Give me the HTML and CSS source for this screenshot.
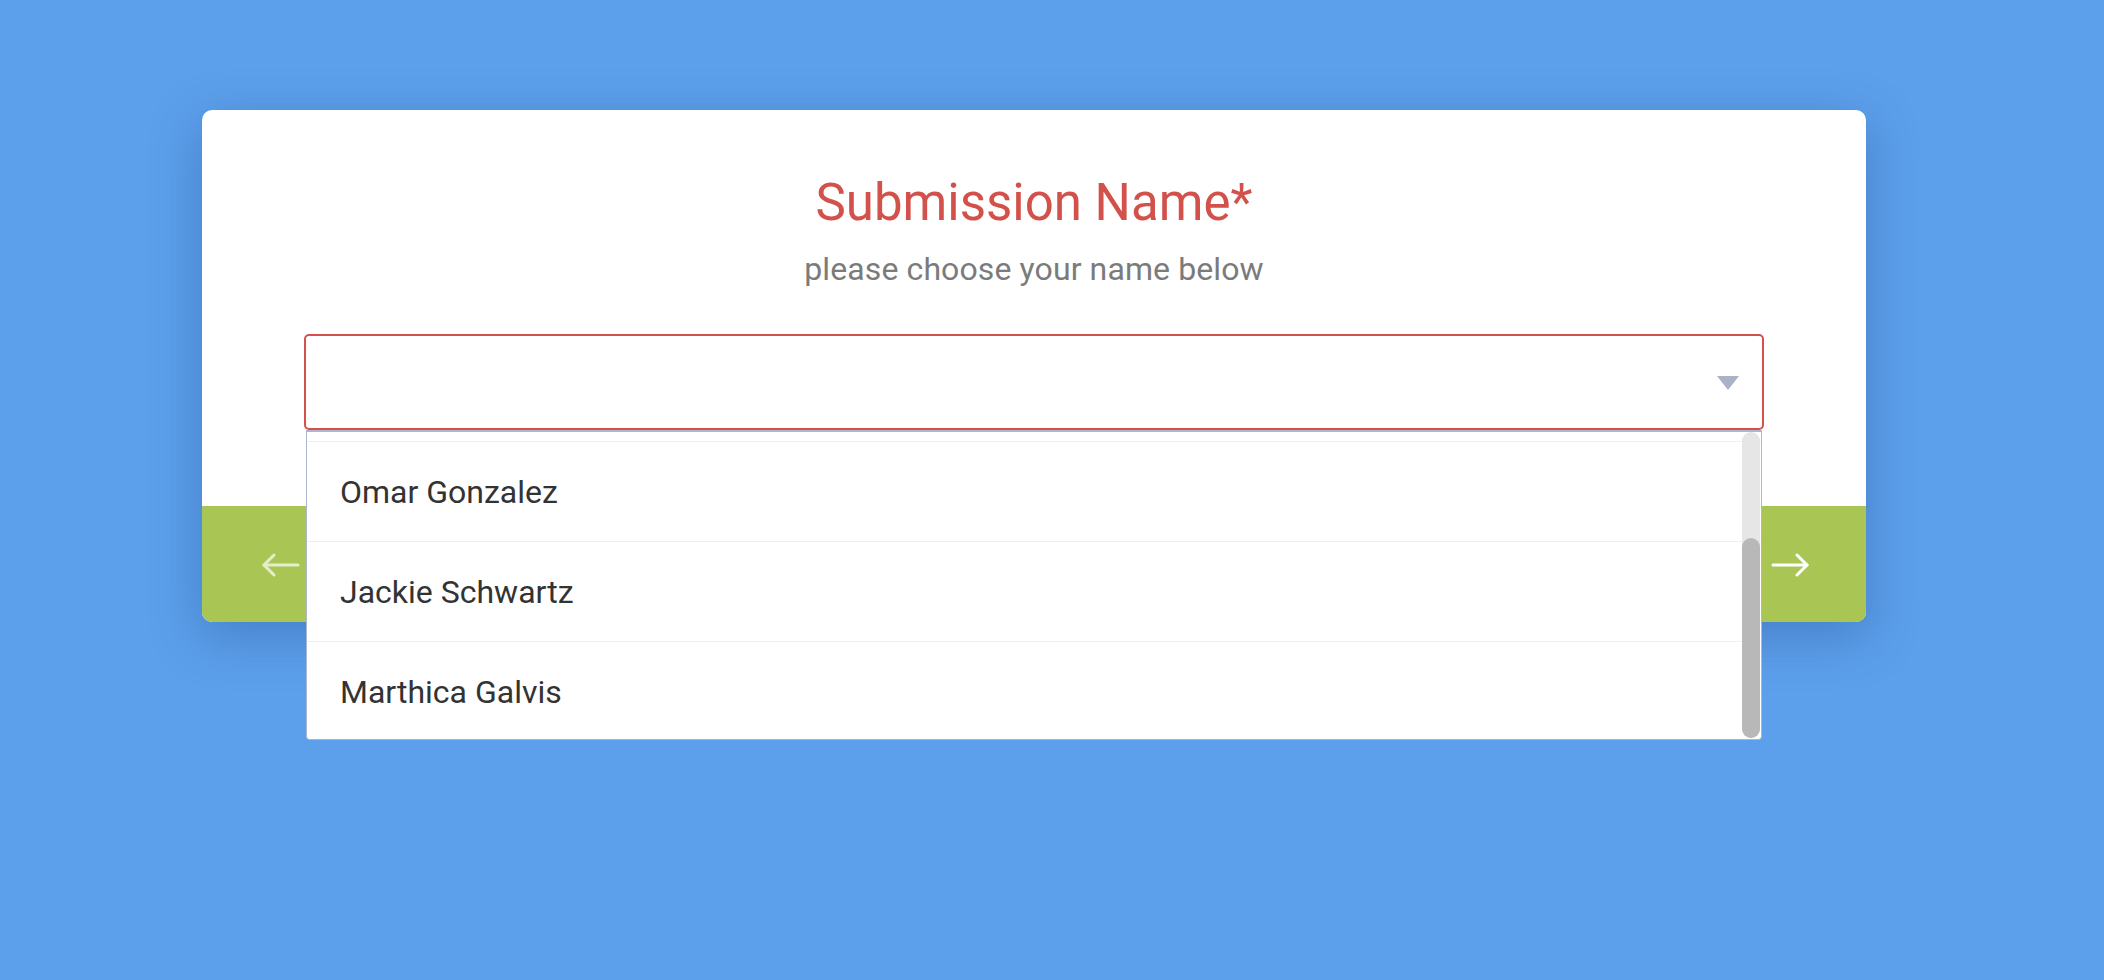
FILE: index.html
```html
<!DOCTYPE html>
<html lang="en">
<head>
<meta charset="utf-8">
<title>Submission Name</title>
<link rel="stylesheet" href="styles.css">
</head>
<body>
<div class="card">
  <div class="card-body">
    <h1 class="title">Submission Name*</h1>
    <p class="subtitle">please choose your name below</p>
    <div class="select-wrap">
      <div class="select">
        <svg class="caret" width="22" height="14" viewBox="0 0 22 14"><polygon points="0,0 22,0 11,14" fill="#a9b2c6"/></svg>
      </div>
      <div class="dropdown">
        <div class="list">
          <div class="item item-partial"></div>
          <div class="item">Omar Gonzalez</div>
          <div class="item">Jackie Schwartz</div>
          <div class="item item-last">Marthica Galvis</div>
        </div>
        <div class="scroll-track"><div class="scroll-thumb"></div></div>
      </div>
    </div>
  </div>
  <div class="card-footer">
    <svg class="arrow arrow-prev" width="38" height="24" viewBox="0 0 38 24"><g fill="none" stroke="#fff" stroke-width="3" stroke-linecap="round" stroke-linejoin="round"><line x1="2" y1="12" x2="36" y2="12"/><polyline points="12,2 2,12 12,22"/></g></svg>
    <svg class="arrow arrow-next" width="38" height="24" viewBox="0 0 38 24"><g fill="none" stroke="#fff" stroke-width="3" stroke-linecap="round" stroke-linejoin="round"><line x1="2" y1="12" x2="36" y2="12"/><polyline points="26,2 36,12 26,22"/></g></svg>
  </div>
</div>
</body>
</html>
```
FILE: styles.css
```css
html, body {
  margin: 0;
  padding: 0;
}
body {
  background: #5c9fea;
  height: 980px;
  overflow: hidden;
  font-family: Roboto, "Liberation Sans", Arial, sans-serif;
}
.card {
  margin: 110px 0 0 202px;
  width: 1664px;
  height: 512px;
  background: #fff;
  border-radius: 10px;
  box-shadow: 0 14px 50px rgba(30, 70, 140, 0.35);
  display: flex;
  flex-direction: column;
}
.card-body {
  height: 396px;
  box-sizing: border-box;
  padding: 63px 102px 0 102px;
  display: flex;
  flex-direction: column;
  align-items: stretch;
}
.title {
  margin: 0;
  font-size: 51px;
  line-height: 60px;
  font-weight: 400;
  color: #d3514b;
  text-align: center;
}
.subtitle {
  margin: 16px 0 0 0;
  font-size: 32px;
  line-height: 40px;
  letter-spacing: 0.1px;
  color: #7b7b7b;
  text-align: center;
}
.select-wrap {
  position: relative;
  margin-top: 45px;
  z-index: 2;
}
.select {
  height: 96px;
  box-sizing: border-box;
  border: 2px solid #d5504b;
  border-radius: 5px;
  display: flex;
  align-items: center;
  justify-content: flex-end;
  padding-right: 23px;
}
.caret {
  display: block;
  margin-top: 2px;
}
.dropdown {
  position: absolute;
  left: 2px;
  right: 2px;
  top: 96px;
  height: 310px;
  box-sizing: border-box;
  background: #fff;
  border: 1px solid #aeb6cb;
  border-top-width: 2px;
  border-radius: 0 0 4px 4px;
  overflow: hidden;
}
.list {
  display: flex;
  flex-direction: column;
}
.item {
  height: 100px;
  box-sizing: border-box;
  border-bottom: 1px solid #f0f0f2;
  display: flex;
  align-items: center;
  padding-left: 33px;
  font-size: 32px;
  color: #333;
}
.item-partial {
  height: 10px;
}
.item-last {
  border-bottom: none;
}
.scroll-track {
  position: absolute;
  right: 1px;
  top: 0;
  bottom: 1px;
  width: 18px;
  background: #e6e6e6;
  border-radius: 9px;
}
.scroll-thumb {
  position: absolute;
  left: 0;
  right: 0;
  bottom: 0;
  height: 200px;
  background: #b8b8b8;
  border-radius: 9px;
}
.card-footer {
  height: 116px;
  background: #a9c655;
  border-radius: 0 0 10px 10px;
  display: flex;
  align-items: center;
  justify-content: space-between;
  padding: 0 57px 0 60px;
}
.arrow {
  display: block;
  margin-top: 2px;
}
.arrow-prev {
  opacity: 0.7;
}
```
